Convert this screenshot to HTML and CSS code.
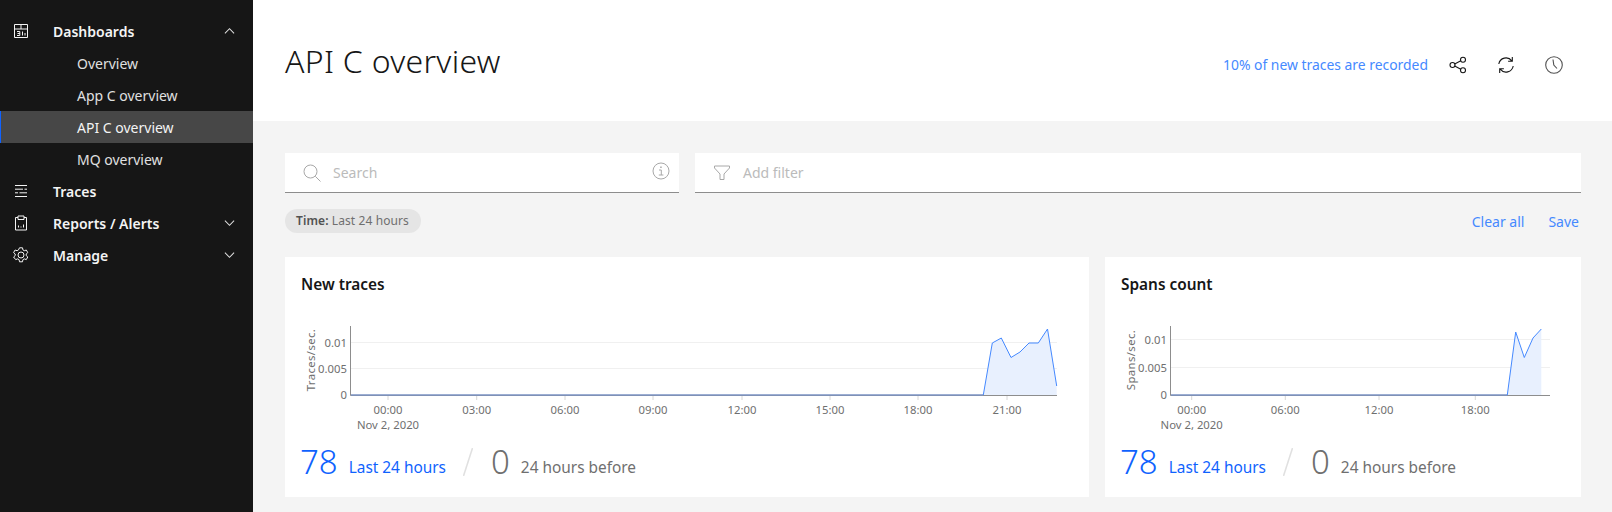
FILE: index.html
```html
<!DOCTYPE html>
<html lang="en">

<head>
    <meta charset="UTF-8">
    <meta name="viewport" content="width=device-width, initial-scale=1.0">
    <title>API C overview</title>
    <link rel="stylesheet" href="styles.css">
</head>

<body>
    <aside class="side">
        <div class="nav-row">
            <svg class="nav-icon" viewBox="0 0 16 16"><path d="M1.500 1.500h13v13h-13zM1.500 6h13M8 1.500V6"/><path d="M4 8.500h2.800v4H4M4.500 10.500h2.300M9.500 8.500v4M12 10v2.500"/></svg>
            <span>Dashboards</span>
            <svg class="chev" viewBox="0 0 12 8"><path d="M1 6.500l5-5 5 5"/></svg>
        </div>
        <a class="sub-row" href="javascript:;">Overview</a>
        <a class="sub-row" href="javascript:;">App C overview</a>
        <a class="sub-row active" href="javascript:;">API C overview</a>
        <a class="sub-row" href="javascript:;">MQ overview</a>
        <div class="nav-row">
            <svg class="nav-icon" viewBox="0 0 16 16"><path d="M2 2.500h12M2 6.200h8M11.500 6.200H14M2 9.800h3M6.500 9.800H14M2 13.500h12"/></svg>
            <span>Traces</span>
        </div>
        <div class="nav-row">
            <svg class="nav-icon" viewBox="0 0 16 16"><path d="M5 2.500H2.500v12.500h11V2.500H11M5 1h6v3.500H5zM5.500 12.500v-2M8 12.500V11.500M10.500 12.500V9.500"/></svg>
            <span>Reports / Alerts</span>
            <svg class="chev" viewBox="0 0 12 8"><path d="M1 1.500l5 5 5-5"/></svg>
        </div>
        <div class="nav-row">
            <svg class="nav-icon" viewBox="0 0 16 16"><circle cx="8" cy="8" r="3"/><path d="M6.500.8h3l.4 2.100 1.400.8 2-.7 1.500 2.600-1.600 1.400v1.600l1.600 1.400-1.500 2.600-2-.7-1.400.8-.4 2.100h-3l-.4-2.100-1.400-.8-2 .7L.6 10l1.600-1.400V7L.6 5.600 2.100 3l2 .7 1.400-.8z"/></svg>
            <span>Manage</span>
            <svg class="chev" viewBox="0 0 12 8"><path d="M1 1.500l5 5 5-5"/></svg>
        </div>
    </aside>

    <main class="main">
        <header class="top">
            <h1>API C overview</h1>
            <div class="top-right">
                <a class="rec" href="javascript:;">10% of new traces are recorded</a>
                <svg class="act share" viewBox="0 0 18 18"><circle cx="3.500" cy="9" r="2.500"/><circle cx="14" cy="3.700" r="2.500"/><circle cx="14" cy="14.300" r="2.500"/><path d="M5.700 7.900l6.100-3.100M5.700 10.100l6.100 3.100"/></svg>
                <svg class="act refresh" viewBox="0 0 18 18"><path d="M1.800 8A7.300 7.300 0 0 1 14.800 4.800M15.300 1v4.200h-4.200M16.200 10A7.300 7.300 0 0 1 3.200 13.200M2.700 17v-4.200h4.200"/></svg>
                <svg class="act clock" viewBox="0 0 18 18"><circle cx="9" cy="9" r="8.300"/><path d="M8 3.500l.8 5.500 3.200 3.500"/></svg>
            </div>
        </header>

        <div class="filters">
            <div class="field search">
                <svg class="field-icon" viewBox="0 0 18 18"><circle cx="7.500" cy="7.500" r="6.500"/><path d="M12.300 12.300l5.200 5.200"/></svg>
                <span class="ph">Search</span>
                <svg class="info" viewBox="0 0 18 18"><circle cx="9" cy="9" r="8"/><path d="M7 8h2.300v5M6.800 13h4.600"/><path class="dot" d="M8.200 4.500h1.500V6H8.200z"/></svg>
            </div>
            <div class="field filter">
                <svg class="field-icon" viewBox="0 0 18 18"><path d="M1.500 2h15v2L11 10v5.500H7V10L1.500 4z"/></svg>
                <span class="ph">Add filter</span>
            </div>
        </div>

        <div class="chips">
            <span class="chip"><b>Time:</b> Last 24 hours</span>
            <span class="links"><a href="javascript:;">Clear all</a><a href="javascript:;">Save</a></span>
        </div>

        <div class="cards">
            <section class="card">
                <h2>New traces</h2>
                <svg class="chart" viewBox="0 0 804 112" width="804" height="112">
                    <path class="grid" d="M66 22.500h706M66 48.500h706"/>
                    <path class="tick" d="M103 75v5M191.700 75v5M280 75v5M368 75v5M457 75v5M545 75v5M633 75v5M722 75v5"/>
                    <path class="area" d="M698.300 75L707.300 23 716.300 18 726 37.500 735 32 744 23 753.300 23 762.500 9 771.700 66V75z"/>
                    <path class="axis" d="M65.500 6v69.500H772"/>
                    <path class="flat" d="M66 75H698.300"/>
                    <path class="line" d="M698.300 75L707.300 23 716.300 18 726 37.500 735 32 744 23 753.300 23 762.500 9 771.700 66"/>
                    <text class="ylabel" transform="rotate(-90 30 40)" x="30" y="40">Traces/sec.</text>
                    <text class="yval" x="62" y="26.500">0.01</text>
                    <text class="yval" x="62" y="52.500">0.005</text>
                    <text class="yval" x="62" y="79">0</text>
                    <text class="xval" x="103" y="94">00:00</text>
                    <text class="xval" x="103" y="109">Nov 2, 2020</text>
                    <text class="xval" x="191.700" y="94">03:00</text>
                    <text class="xval" x="280" y="94">06:00</text>
                    <text class="xval" x="368" y="94">09:00</text>
                    <text class="xval" x="457" y="94">12:00</text>
                    <text class="xval" x="545" y="94">15:00</text>
                    <text class="xval" x="633" y="94">18:00</text>
                    <text class="xval" x="722" y="94">21:00</text>
                </svg>
                <div class="stats">
                    <span class="num blue">78</span><span class="lbl blue">Last 24 hours</span>
                    <svg class="slash" viewBox="0 0 10 28"><path d="M9.500 0L.500 28"/></svg>
                    <span class="num grey">0</span><span class="lbl grey">24 hours before</span>
                </div>
            </section>
            <section class="card">
                <h2>Spans count</h2>
                <svg class="chart" viewBox="0 0 476 112" width="476" height="112">
                    <path class="grid" d="M66 19.500h379M66 47.500h379"/>
                    <path class="tick" d="M86.700 75v5M180.300 75v5M274 75v5M370.300 75v5"/>
                    <path class="area" d="M402.300 75L410.700 12 419.300 37.500 428 18 436.300 9V75z"/>
                    <path class="axis" d="M65.500 6v69.500H445"/>
                    <path class="flat" d="M66 75H402.300"/>
                    <path class="line" d="M402.300 75L410.700 12 419.300 37.500 428 18 436.300 9"/>
                    <text class="ylabel" transform="rotate(-90 30 40)" x="30" y="40">Spans/sec.</text>
                    <text class="yval" x="62" y="23.500">0.01</text>
                    <text class="yval" x="62" y="51.500">0.005</text>
                    <text class="yval" x="62" y="79">0</text>
                    <text class="xval" x="86.700" y="94">00:00</text>
                    <text class="xval" x="86.700" y="109">Nov 2, 2020</text>
                    <text class="xval" x="180.300" y="94">06:00</text>
                    <text class="xval" x="274" y="94">12:00</text>
                    <text class="xval" x="370.300" y="94">18:00</text>
                </svg>
                <div class="stats">
                    <span class="num blue">78</span><span class="lbl blue">Last 24 hours</span>
                    <svg class="slash" viewBox="0 0 10 28"><path d="M9.500 0L.500 28"/></svg>
                    <span class="num grey">0</span><span class="lbl grey">24 hours before</span>
                </div>
            </section>
        </div>
    </main>
</body>

</html>
```

FILE: styles.css
```css
* {
    padding: 0;
    margin: 0;
    box-sizing: border-box;
}

body {
    display: flex;
    height: 512px;
    overflow: hidden;
    background-color: #f4f4f4;
    font-family: "Noto Sans", "Liberation Sans", sans-serif;
    color: #161616;
}

a {
    text-decoration: none;
}

/* sidebar */
.side {
    width: 253px;
    flex-shrink: 0;
    padding-top: 15px;
    background-color: #161616;
    color: #f4f4f4;
}

.nav-row {
    display: flex;
    align-items: center;
    height: 32px;
    padding-left: 13px;
    font-size: 14px;
    font-weight: 600;
}

.nav-icon {
    width: 16px;
    height: 16px;
    margin-right: 24px;
    fill: none;
    stroke: #f4f4f4;
    stroke-width: 1;
}

.nav-row span {
    flex: 1;
}

.chev {
    width: 11px;
    height: 8px;
    margin-right: 18px;
    fill: none;
    stroke: #e0e0e0;
    stroke-width: 1.1;
}

.sub-row {
    display: flex;
    align-items: center;
    height: 32px;
    padding-left: 77px;
    font-size: 14px;
    color: #e0e0e0;
}

.sub-row.active {
    padding-left: 76px;
    background-color: #474747;
    border-left: 1px solid #0f62fe;
    color: #f4f4f4;
}

/* main */
.main {
    flex: 1;
    min-width: 0;
}

.top {
    display: flex;
    justify-content: space-between;
    align-items: center;
    height: 121px;
    padding: 8px 49px 0 32px;
    background-color: #fff;
}

h1 {
    font-size: 32px;
    font-weight: 300;
    letter-spacing: .3px;
    margin-top: -8px;
}

.top-right {
    display: flex;
    align-items: center;
}

.rec {
    font-size: 13.900px;
    color: #4589ff;
    margin-right: 21px;
}

.act {
    width: 18px;
    height: 18px;
    fill: none;
    stroke: #161616;
    stroke-width: 1.1;
}

.refresh {
    margin-left: 30px;
}

.clock {
    margin-left: 30px;
    stroke: #525252;
}

.filters {
    display: flex;
    gap: 16px;
    padding: 32px 31px 0 32px;
}

.field {
    display: flex;
    align-items: center;
    height: 40px;
    background-color: #fff;
    border-bottom: 1px solid #8d8d8d;
    padding-left: 18px;
    font-size: 14px;
}

.search {
    width: 394px;
}

.filter {
    flex: 1;
}

.field-icon {
    width: 18px;
    height: 18px;
    margin-right: 12px;
    fill: none;
    stroke: #a8a8a8;
    stroke-width: 1;
}

.ph {
    flex: 1;
    color: #bbb;
}

.info {
    width: 18px;
    height: 18px;
    margin: -4px 9px 0 0;
    fill: none;
    stroke: #a8a8a8;
    stroke-width: 1;
}

.info .dot {
    fill: #a8a8a8;
    stroke: none;
}

.chips {
    display: flex;
    justify-content: space-between;
    align-items: center;
    padding: 16px 33px 0 32px;
}

.chip {
    display: inline-block;
    height: 24px;
    line-height: 24px;
    width: 136px;
    padding-left: 11px;
    border-radius: 12px;
    background-color: #e5e5e5;
    font-size: 12px;
    letter-spacing: .1px;
    color: #6f6f6f;
}

.chip b {
    font-weight: 600;
    color: #525252;
}

.links a {
    margin-left: 24px;
    font-size: 14px;
    color: #4589ff;
}

.cards {
    display: flex;
    gap: 16px;
    padding: 24px 31px 0 32px;
}

.card {
    height: 240px;
    padding-top: 16px;
    background-color: #fff;
}

h2 {
    height: 24px;
    line-height: 24px;
    padding-left: 16px;
    font-size: 15.400px;
    font-weight: 600;
}

.chart {
    display: block;
    margin-top: 23px;
}

.grid {
    fill: none;
    stroke: #f0f0f0;
}

.tick {
    fill: none;
    stroke: #d6d6d6;
}

.axis {
    fill: none;
    stroke: #8d8d8d;
}

.area {
    fill: #e8f0fe;
}

.flat {
    fill: none;
    stroke: #7b93c4;
    stroke-width: 1.500;
}

.line {
    fill: none;
    stroke: #4589ff;
    stroke-width: 1;
}

.chart text {
    font-size: 11.300px;
    fill: #6f6f6f;
}

.ylabel,
.xval {
    text-anchor: middle;
}

.ylabel {
    letter-spacing: .4px;
}

.yval {
    text-anchor: end;
}

.stats {
    display: flex;
    align-items: center;
    height: 36px;
    margin-top: 11px;
    padding-left: 15px;
}

.num {
    font-size: 33px;
    font-weight: 300;
    margin-right: 11px;
}

.lbl {
    font-size: 15.400px;
    margin-top: 13px;
}

.blue {
    color: #0f62fe;
}

.grey {
    color: #6f6f6f;
}

.slash {
    width: 10px;
    height: 28px;
    margin: 2px 18px 0 17px;
    fill: none;
    stroke: #e0e0e0;
    stroke-width: 1.500;
}
```
